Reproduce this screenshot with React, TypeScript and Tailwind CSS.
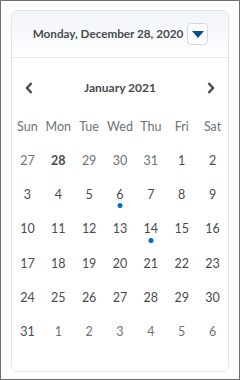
import React from "react";

const weeks: { d: number; cur: boolean; bold?: boolean; dot?: boolean }[][] = [
  [
    { d: 27, cur: false },
    { d: 28, cur: false, bold: true },
    { d: 29, cur: false },
    { d: 30, cur: false },
    { d: 31, cur: false },
    { d: 1, cur: true },
    { d: 2, cur: true },
  ],
  [3, 4, 5, 6, 7, 8, 9].map((d) => ({ d, cur: true, dot: d === 6 })),
  [10, 11, 12, 13, 14, 15, 16].map((d) => ({ d, cur: true, dot: d === 14 })),
  [17, 18, 19, 20, 21, 22, 23].map((d) => ({ d, cur: true })),
  [24, 25, 26, 27, 28, 29, 30].map((d) => ({ d, cur: true })),
  [
    { d: 31, cur: true },
    ...[1, 2, 3, 4, 5, 6].map((d) => ({ d, cur: false })),
  ],
];

const days = ["Sun", "Mon", "Tue", "Wed", "Thu", "Fri", "Sat"];

export default function App() {
  return (
    <div
      className="w-[240px] h-[380px] border border-[#6f6f6f] bg-white pl-[10px] pt-[9px]"
      style={{ fontFamily: "Lato, 'Open Sans', sans-serif" }}
    >
      <div className="w-[218px] h-[362px] border border-[#e3e5ec] rounded-[6px] overflow-hidden flex flex-col">
        <div className="h-[47px] shrink-0 border-b border-[#e8eaf0] bg-gradient-to-b from-[#f1f4fa] to-white flex items-center justify-center gap-[4px] pl-[1px]">
          <span className="text-[11.7px] font-bold text-[#494c4e]">
            Monday, December 28, 2020
          </span>
          <div className="w-[21px] h-[22px] border border-[#d3d9e3] rounded-[4px] bg-white flex items-center justify-center">
            <svg width="12" height="7" viewBox="0 0 12 7">
              <path d="M0 0 L12 0 L6 7 Z" fill="#0c4f8f" />
            </svg>
          </div>
        </div>
        <div className="flex flex-col">
          <div className="h-[38px] mt-[11px] flex items-center justify-between px-[13px]">
            <svg width="8" height="12" viewBox="0 0 8 12">
              <path d="M6.5 1 L2 6 L6.5 11" fill="none" stroke="#494c4e" strokeWidth="2.4" />
            </svg>
            <span className="text-[12px] font-bold text-[#494c4e]">January 2021</span>
            <svg width="8" height="12" viewBox="0 0 8 12">
              <path d="M1.5 1 L6 6 L1.5 11" fill="none" stroke="#494c4e" strokeWidth="2.4" />
            </svg>
          </div>
          <div className="grid grid-cols-7 h-[34px] mt-[3px] items-center text-center text-[12.5px] text-[#6e7376]">
            {days.map((d) => (
              <span key={d}>{d}</span>
            ))}
          </div>
          <div className="flex flex-col">
            {weeks.map((w, i) => (
              <div key={i} className="grid grid-cols-7 h-[34.3px] text-center text-[12.5px]">
                {w.map((c, j) => (
                  <div key={j} className="relative flex items-center justify-center">
                    <span
                      className={
                        c.bold
                          ? "font-bold text-[#494c4e]"
                          : c.cur
                          ? "text-[#494c4e]"
                          : "text-[#6e7376]"
                      }
                    >
                      {c.d}
                    </span>
                    {c.dot && (
                      <span className="absolute left-1/2 -translate-x-1/2 top-[25px] w-[5px] h-[5px] rounded-full bg-[#006fbf]" />
                    )}
                  </div>
                ))}
              </div>
            ))}
          </div>
        </div>
      </div>
    </div>
  );
}
